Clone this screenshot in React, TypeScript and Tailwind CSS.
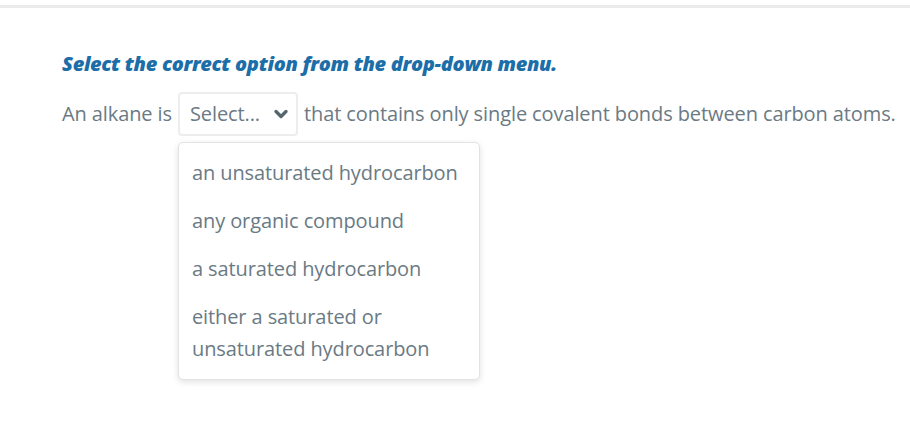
import { ChevronDown } from 'lucide-react';

export default function App() {
  const options = [
    'an unsaturated hydrocarbon',
    'any organic compound',
    'a saturated hydrocarbon',
    'either a saturated or unsaturated hydrocarbon',
  ];

  return (
    <div className="min-h-screen bg-white" style={{ fontFamily: '"Open Sans", sans-serif' }}>
      <div className="mt-[5px] h-[3px] bg-[#ebebeb]" />

      <div className="pl-[62px] pt-[42px]">
        {/* Instruction */}
        <h2 className="text-[20px] font-extrabold italic text-[#1b6ea8] leading-[28px] tracking-[-0.32px]">
          Select the correct option from the drop-down menu.
        </h2>

        {/* Sentence with select */}
        <div className="mt-[14px] flex items-center text-[20px] text-[#6a7a84] tracking-[-0.1px]">
          <span>An alkane is</span>
          <div className="relative ml-[6px] mr-[6px]">
            <button className="flex h-[44px] w-[120px] items-center justify-between rounded-[4px] border-2 border-[#ededed] bg-white pl-[10px] pr-[5px] text-[#6a7a84]">
              <span>Select...</span>
              <ChevronDown className="h-[20px] w-[20px] text-[#56666f]" strokeWidth={4} />
            </button>

            {/* Dropdown menu */}
            <ul className="absolute left-0 top-[50px] z-10 w-[302px] rounded-[5px] border border-[#e3e3e3] bg-white py-[6px] shadow-[0_2px_6px_rgba(0,0,0,0.12)]">
              {options.map((opt) => (
                <li key={opt} className="px-[13px] py-[8px] leading-[32px] text-[#6a7a84]">
                  {opt}
                </li>
              ))}
            </ul>
          </div>
          <span>that contains only single covalent bonds between carbon atoms.</span>
        </div>
      </div>
    </div>
  );
}
